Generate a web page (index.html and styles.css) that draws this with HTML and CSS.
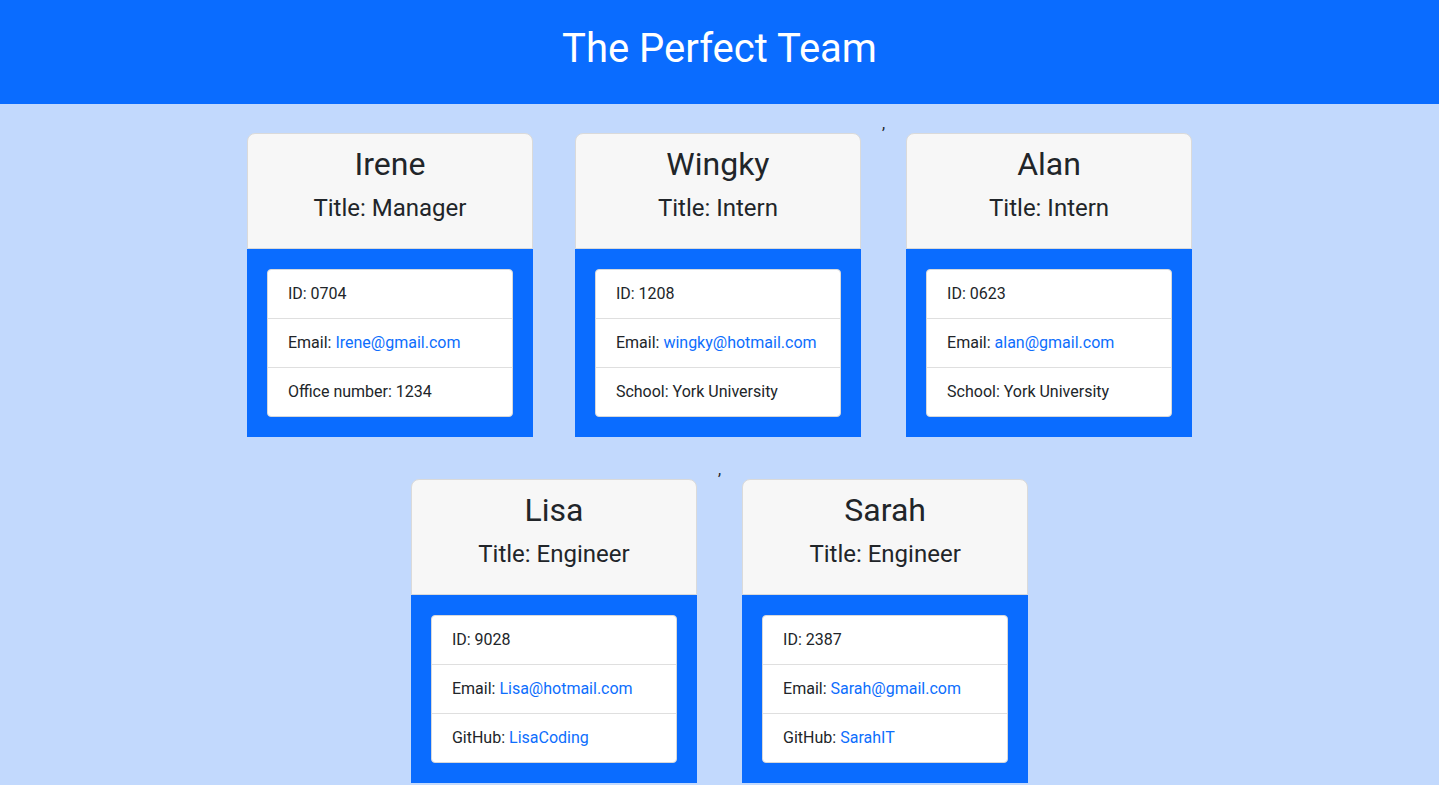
FILE: index.html
```html
<!DOCTYPE html>
<html>
  <head>
    <title>The Perfect Team</title>
    <meta name="viewport" content="width=device-width, initial-scale=1">

    <link rel="stylesheet" href="styles.css">

  </head>

  <body>

    <header class="page-header">
      <h1>The Perfect Team</h1>
    </header>

    <main class="team">
      <div class="card">
        <div class="card-header">
          <h2>Irene</h2>
          <h4>Title: Manager</h4>
        </div>
        <div class="card-body">
          <ul class="info-list">
            <li>ID: 0704</li>
            <li>Email: <a href="mailto:Irene@gmail.com">Irene@gmail.com</a></li>
            <li>Office number: 1234</li>
          </ul>
        </div>
      </div>
      <div class="card">
        <div class="card-header">
          <h2>Wingky</h2>
          <h4>Title: Intern</h4>
        </div>
        <div class="card-body">
          <ul class="info-list">
            <li>ID: 1208</li>
            <li>Email: <a href="mailto:wingky@hotmail.com">wingky@hotmail.com</a></li>
            <li>School: York University</li>
          </ul>
        </div>
      </div>,<div class="card">
        <div class="card-header">
          <h2>Alan</h2>
          <h4>Title: Intern</h4>
        </div>
        <div class="card-body">
          <ul class="info-list">
            <li>ID: 0623</li>
            <li>Email: <a href="mailto:alan@gmail.com">alan@gmail.com</a></li>
            <li>School: York University</li>
          </ul>
        </div>
      </div>
      <div class="card">
        <div class="card-header">
          <h2>Lisa</h2>
          <h4>Title: Engineer</h4>
        </div>
        <div class="card-body">
          <ul class="info-list">
            <li>ID: 9028</li>
            <li>Email: <a href="mailto:Lisa@hotmail.com">Lisa@hotmail.com</a></li>
            <li>GitHub: <a href="#">LisaCoding</a></li>
          </ul>
        </div>
      </div>,<div class="card">
        <div class="card-header">
          <h2>Sarah</h2>
          <h4>Title: Engineer</h4>
        </div>
        <div class="card-body">
          <ul class="info-list">
            <li>ID: 2387</li>
            <li>Email: <a href="mailto:Sarah@gmail.com">Sarah@gmail.com</a></li>
            <li>GitHub: <a href="#">SarahIT</a></li>
          </ul>
        </div>
      </div>
    </main>

  </body>
</html>
```

FILE: styles.css
```css
body {
  margin: 0;
  background-color: #c2d9fd;
  font-family: Roboto, "Liberation Sans", sans-serif;
  font-size: 16px;
  line-height: 1.5;
  color: #212529;
}

a {
  color: #0d6efd;
  text-decoration: none;
}

.page-header {
  background-color: #0a6cff;
  color: white;
  text-align: center;
  padding: 25px 0 31px;
}

.page-header h1 {
  margin: 0;
  font-size: 40px;
  font-weight: 400;
  line-height: 1.2;
}

.team {
  max-width: 1110px;
  margin: 8px auto 0;
  display: flex;
  flex-wrap: wrap;
  justify-content: center;
}

.card {
  width: 286px;
  margin: 21px;
}

.card-header {
  background-color: #f7f7f7;
  border: 1px solid #dadada;
  border-radius: 8px 8px 0 0;
  padding: 11px 16px 25px;
  text-align: center;
}

.card-header h2 {
  margin: 0 0 10.6px;
  font-size: 32px;
  font-weight: 400;
  line-height: 1.2;
}

.card-header h4 {
  margin: 0;
  font-size: 24px;
  font-weight: 400;
  line-height: 1.2;
}

.card-body {
  background-color: #0a6cff;
  padding: 20px;
}

.info-list {
  list-style: none;
  margin: 0;
  padding: 0;
  background-color: white;
  border: 1px solid #d6d8db;
  border-radius: 4px;
}

.info-list li {
  padding: 12px 20px;
}

.info-list li + li {
  border-top: 1px solid #dfdfdf;
}
```
